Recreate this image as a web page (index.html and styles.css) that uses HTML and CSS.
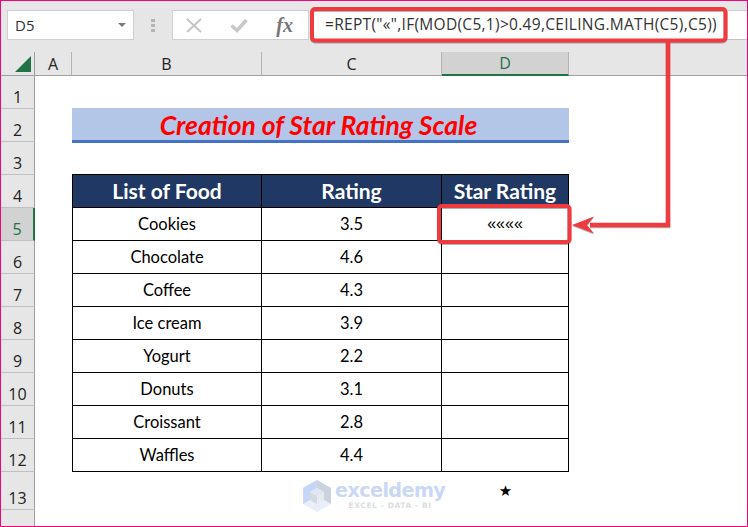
FILE: index.html
```html
<!DOCTYPE html>
<html lang="en">
<head>
<meta charset="utf-8">
<title>Creation of Star Rating Scale</title>
<link rel="stylesheet" href="styles.css">
</head>
<body>
<div class="app">
  <div class="formula-bar">
    <div class="name-box"><span>D5</span><i class="caret"></i></div>
    <div class="grip"><i></i><i></i><i></i></div>
    <div class="fx-box">
      <svg class="fx-icon" width="16" height="15" viewBox="0 0 16 15"><path d="M1 1l14 13M15 1L1 14" stroke="#c4c4c4" stroke-width="2" fill="none"/></svg>
      <svg class="fx-icon" width="18" height="15" viewBox="0 0 18 15"><path d="M1.500 7.500l5.500 5L16.500 2" stroke="#c8c8c8" stroke-width="3.500" fill="none"/></svg>
      <span class="fx">fx</span>
    </div>
    <div class="formula">=REPT("«",IF(MOD(C5,1)&gt;0.49,CEILING.MATH(C5),C5))</div>
  </div>
  <div class="gap-band"></div>
  <div class="sheet">
    <div class="corner"><i class="tri"></i></div>
    <div class="col-h">A</div>
    <div class="col-h">B</div>
    <div class="col-h">C</div>
    <div class="col-h sel">D</div>
    <div class="col-rest"></div>

    <div class="row-h">1</div><div class="blank r"></div>

    <div class="row-h">2</div><div class="blank"></div><div class="title">Creation of Star Rating Scale</div><div class="blank"></div>

    <div class="row-h">3</div><div class="blank r"></div>

    <div class="row-h">4</div><div class="blank"></div>
    <div class="th first">List of Food</div><div class="th">Rating</div><div class="th">Star Rating</div><div class="blank"></div>

    <div class="row-h sel-r">5</div><div class="blank"></div>
    <div class="td first">Cookies</div><div class="td">3.5</div><div class="td stars">««««</div><div class="blank"></div>

    <div class="row-h">6</div><div class="blank"></div>
    <div class="td first">Chocolate</div><div class="td">4.6</div><div class="td"></div><div class="blank"></div>

    <div class="row-h">7</div><div class="blank"></div>
    <div class="td first">Coffee</div><div class="td">4.3</div><div class="td"></div><div class="blank"></div>

    <div class="row-h">8</div><div class="blank"></div>
    <div class="td first">Ice cream</div><div class="td">3.9</div><div class="td"></div><div class="blank"></div>

    <div class="row-h">9</div><div class="blank"></div>
    <div class="td first">Yogurt</div><div class="td">2.2</div><div class="td"></div><div class="blank"></div>

    <div class="row-h">10</div><div class="blank"></div>
    <div class="td first">Donuts</div><div class="td">3.1</div><div class="td"></div><div class="blank"></div>

    <div class="row-h">11</div><div class="blank"></div>
    <div class="td first">Croissant</div><div class="td">2.8</div><div class="td"></div><div class="blank"></div>

    <div class="row-h">12</div><div class="blank"></div>
    <div class="td first">Waffles</div><div class="td">4.4</div><div class="td"></div><div class="blank"></div>

    <div class="row-h">13</div><div class="blank"></div><div class="blank"></div><div class="blank"></div><div class="star">★</div><div class="blank"></div>
    <div class="row-h last"></div><div class="blank r"></div>
  </div>

  <div class="watermark">
    <svg width="28" height="32" viewBox="0 0 28 32">
      <path d="M14 0L28 8V24L14 32 0 24V8z" fill="#e8eff8"/>
      <path d="M14 0L0 8V24l7-4V12l7-4z" fill="#c6d6f6"/>
      <path d="M14 0L28 8V24l-7-4V12l-7-4z" fill="#ccd3de"/>
      <path d="M14 8l7 4-7 4-7-4z" fill="#dfe7f4"/>
      <path d="M7 12l7 4v8l-7-4z" fill="#d4dae3"/>
      <path d="M21 12l-7 4v8l7-4z" fill="#e6ebf2"/>
    </svg>
    <div class="wm-text"><span class="wm-name">exceldemy</span><span class="wm-sub">EXCEL - DATA - BI</span></div>
  </div>

  <svg class="callouts" width="748" height="527" viewBox="0 0 748 527">
    <rect x="312" y="9" width="413.500" height="31.500" rx="3" fill="none" stroke="#ef3b3f" stroke-width="4"/>
    <rect x="439" y="206" width="130.500" height="36" rx="3" fill="none" stroke="#ef3b3f" stroke-width="4"/>
    <path d="M668 41V225H590" fill="none" stroke="#ef3b3f" stroke-width="4.500"/>
    <path d="M572 225L594 216.500 587 225 594 233.500z" fill="#ef3b3f"/>
  </svg>
</div>
</body>
</html>
```
FILE: styles.css
```css
* { box-sizing: border-box; }
html, body { margin: 0; padding: 0; }
body { width: 748px; height: 527px; overflow: hidden; background: #fff; }
.app {
  position: relative;
  width: 748px;
  height: 527px;
  border: 1px solid #f5047d;
  background: #e6e6e6;
  overflow: hidden;
  font-family: "Lato", "Liberation Sans", sans-serif;
}
.formula-bar {
  display: flex;
  align-items: stretch;
  height: 30px;
  margin-top: 9px;
  padding-left: 6px;
}
.name-box {
  width: 127px;
  background: #fff;
  border: 1px solid #d0d0d0;
  display: flex;
  align-items: center;
  justify-content: space-between;
  padding: 0 7px;
  font: 15px "Open Sans", sans-serif;
  color: #333;
}
.caret {
  width: 0;
  height: 0;
  border-left: 4px solid transparent;
  border-right: 4px solid transparent;
  border-top: 4px solid #777;
}
.grip {
  width: 38px;
  display: flex;
  flex-direction: column;
  align-items: center;
  justify-content: center;
  gap: 2px;
}
.grip i { display: block; width: 4px; height: 3px; background: #b4b4b4; }
.fx-box {
  width: 137px;
  background: #fff;
  border: 1px solid #d0d0d0;
  display: flex;
  align-items: center;
  justify-content: space-between;
  padding: 0 15px 0 13px;
}
.fx {
  font: italic bold 20px "Liberation Serif", serif;
  color: #777;
}
.formula {
  flex: 1;
  margin-left: 3px;
  background: #fff;
  border-top: 1px solid #d0d0d0;
  border-bottom: 1px solid #c4c4c4;
  padding-left: 13px;
  font: 15.500px/26px "Open Sans", sans-serif;
  letter-spacing: 0.3px;
  color: #333;
  white-space: nowrap;
}
.gap-band { height: 12px; }
.sheet {
  display: grid;
  grid-template-columns: 34px 37px 190px 180px 127px 1fr;
  grid-template-rows: 24px repeat(12, 33px) 38px 1fr;
  height: 474px;
  color: #000;
}
.corner, .col-h, .col-rest {
  background: #e6e6e6;
  border-bottom: 1px solid #a0a0a0;
}
.corner { position: relative; border-right: 1px solid #a0a0a0; }
.tri {
  position: absolute;
  right: 3px;
  bottom: 3px;
  width: 0;
  height: 0;
  border-left: 16px solid transparent;
  border-bottom: 16px solid #217346;
}
.col-h {
  display: flex;
  align-items: center;
  justify-content: center;
  border-right: 1px solid #b4b4b4;
  font: 16px "Open Sans", sans-serif;
  color: #222;
}
.col-h.sel {
  background: #d2d2d2;
  color: #217346;
  border-bottom: 2px solid #217346;
}
.row-h {
  display: flex;
  align-items: flex-end;
  justify-content: center;
  padding-bottom: 2px;
  background: #e6e6e6;
  border-right: 1px solid #a0a0a0;
  border-bottom: 1px solid #c0c0c0;
  font: 16px/18px "Open Sans", sans-serif;
  color: #222;
}
.row-h.sel-r {
  background: #d2d2d2;
  color: #217346;
  border-right: 2px solid #217346;
}
.row-h.last { border-bottom: 0; }
.blank { background: #fff; }
.blank.r { grid-column: 2 / -1; }
.title {
  grid-column: 3 / 6;
  z-index: 1;
  height: 35px;
  margin-top: -1px;
  padding: 1px 4px 0 0;
  background: #b4c6e7;
  border-bottom: 3px solid #4472c4;
  display: flex;
  align-items: center;
  justify-content: center;
  font: italic bold 26.500px "Lato", sans-serif;
  color: #f00;
}
.th, .td {
  display: flex;
  align-items: center;
  justify-content: center;
  border-right: 1px solid #000;
  border-bottom: 1px solid #000;
  background: #fff;
}
.th {
  z-index: 1;
  margin-top: -1px;
  padding-bottom: 2px;
  background: #1f3864;
  border-top: 1px solid #000;
  color: #fff;
  font-weight: 700;
  font-size: 21px;
}
.td { font-size: 16.500px; }
.first { border-left: 1px solid #000; }
.stars { font-size: 16px; font-family: "Liberation Sans", sans-serif; }
.star {
  background: #fff;
  display: flex;
  align-items: center;
  justify-content: center;
  font: 15px "DejaVu Sans", sans-serif;
}
.watermark {
  position: absolute;
  left: 302px;
  top: 479px;
  display: flex;
  gap: 4px;
}
.wm-text { display: flex; flex-direction: column; align-items: center; }
.wm-name {
  font: bold 19.200px/22px "DejaVu Sans", sans-serif;
  letter-spacing: -0.6px;
  color: #c9d8f5;
}
.wm-sub {
  font: bold 7.500px/7px "DejaVu Sans", sans-serif;
  letter-spacing: 0.6px;
  color: #dcdcdc;
}
.callouts {
  position: absolute;
  z-index: 2;
  left: -1px;
  top: -1px;
  pointer-events: none;
  filter: drop-shadow(0 1px 0.5px rgba(0, 0, 0, 0.3));
}
```
